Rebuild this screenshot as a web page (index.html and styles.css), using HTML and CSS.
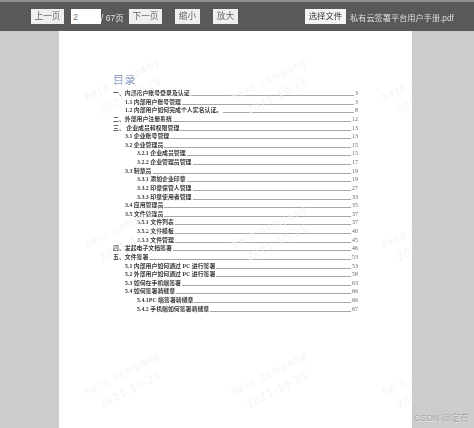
FILE: index.html
```html
<!DOCTYPE html>
<html lang="zh">
<head>
<meta charset="utf-8">
<title>PDF</title>
<link rel="stylesheet" href="styles.css">
</head>
<body>
<header class="toolbar">
  <div class="pager">
    <button class="btn btn-page">上一页</button>
    <input class="page-input" value="2">
    <span class="total">/ 67页</span>
    <button class="btn btn-page">下一页</button>
  </div>
  <button class="btn btn-zoom">缩小</button>
  <button class="btn btn-zoom">放大</button>
  <div class="file">
    <button class="btn btn-file">选择文件</button>
    <span class="filename">私有云签署平台用户手册.pdf</span>
  </div>
</header>
<main class="viewer">
  <section class="page">
    <h1 class="toc-title">目录</h1>
    <ol class="toc">
      <li class="l1"><span>一、内部用户账号登录及认证</span><i></i><b>3</b></li>
      <li class="l2"><span>1.1 内部用户账号管理</span><i></i><b>3</b></li>
      <li class="l2"><span>1.2 内部用户如何完成个人实名认证。</span><i></i><b>8</b></li>
      <li class="l1"><span>二、外部用户注册系统</span><i></i><b>12</b></li>
      <li class="l1"><span>三、 企业成员和权限管理</span><i></i><b>13</b></li>
      <li class="l2"><span>3.1 企业账号管理</span><i></i><b>13</b></li>
      <li class="l2"><span>3.2 企业管理员</span><i></i><b>15</b></li>
      <li class="l3"><span>3.2.1 企业成员管理</span><i></i><b>15</b></li>
      <li class="l3"><span>3.2.2 企业管理员管理</span><i></i><b>17</b></li>
      <li class="l2"><span>3.3 制章员</span><i></i><b>19</b></li>
      <li class="l3"><span>3.3.1 添加企业印章</span><i></i><b>19</b></li>
      <li class="l3"><span>3.3.2 印章保管人管理</span><i></i><b>27</b></li>
      <li class="l3"><span>3.3.3 印章使用者管理</span><i></i><b>33</b></li>
      <li class="l2"><span>3.4 应用管理员</span><i></i><b>35</b></li>
      <li class="l2"><span>3.5 文件管理员</span><i></i><b>37</b></li>
      <li class="l3"><span>3.5.1 文件列表</span><i></i><b>37</b></li>
      <li class="l3"><span>3.5.2 文件模板</span><i></i><b>40</b></li>
      <li class="l3"><span>3.5.3 文件管理</span><i></i><b>45</b></li>
      <li class="l1"><span>四、发起电子文档签署</span><i></i><b>46</b></li>
      <li class="l1"><span>五、文件签署</span><i></i><b>53</b></li>
      <li class="l2"><span>5.1 内部用户如何通过 PC 进行签署</span><i></i><b>53</b></li>
      <li class="l2"><span>5.2 外部用户如何通过 PC 进行签署</span><i></i><b>58</b></li>
      <li class="l2"><span>5.3 如何在手机端签署</span><i></i><b>63</b></li>
      <li class="l2"><span>5.4 如何签署骑缝章</span><i></i><b>66</b></li>
      <li class="l3"><span>5.4.1PC 端签署骑缝章</span><i></i><b>66</b></li>
      <li class="l3"><span>5.4.2 手机端如何签署骑缝章</span><i></i><b>67</b></li>
    </ol>
    <div class="mark m1">hero company<br>2021-10-25</div>
    <div class="mark m2">hero company<br>2021-10-25</div>
    <div class="mark m3">hero company<br>2021-10-25</div>
    <div class="mark m4">hero company<br>2021-10-25</div>
    <div class="mark m5">hero company<br>2021-10-25</div>
    <div class="mark m6">hero company<br>2021-10-25</div>
    <div class="mark m7">hero company<br>2021-10-25</div>
    <div class="mark m8">hero company<br>2021-10-25</div>
    <div class="mark m9">hero company<br>2021-10-25</div>
  </section>
</main>
<div class="csdn">CSDN @定在</div>
</body>
</html>
```
FILE: styles.css
```css
* { box-sizing: border-box; }
html, body { margin: 0; height: 100%; overflow: hidden; }
body {
  background: #cccccc;
  font-family: "Liberation Sans", "Noto Sans CJK SC", sans-serif;
  display: flex;
  flex-direction: column;
}
.toolbar {
  height: 31px;
  flex: none;
  background: #595959;
  border-top: 2px solid #8f8f8f;
  padding: 0 0 0 31px;
  display: flex;
  align-items: center;
  color: #f2f2f2;
  font-size: 9px;
}
.pager { display: flex; align-items: center; }
.btn {
  height: 15px;
  padding: 0;
  border: 0;
  background: #efefef;
  color: #666;
  font: 8.7px/15px "Liberation Sans", "Noto Sans CJK SC", sans-serif;
  filter: blur(0.35px);
}
.btn-page { width: 33px; }
.btn-zoom { width: 25px; margin-left: 13px; }
.page-input {
  width: 30px;
  height: 15px;
  margin-left: 7px;
  padding: 0 0 0 2px;
  border: 0;
  background: #fff;
  color: #777;
  font: 9px "Liberation Sans", sans-serif;
}
.total { width: 28px; font-size: 8.5px; white-space: nowrap; color: #e6e6e6; filter: blur(0.35px); }
.file { margin-left: 67px; display: flex; align-items: center; }
.btn-file { width: 41px; color: #333; background: #f4f4f4; font-size: 8.4px; }
.filename { margin-left: 4px; font-size: 8.2px; white-space: nowrap; color: #dedede; filter: blur(0.35px); }
.viewer { flex: 1; display: flex; padding-left: 59px; min-height: 0; }
.page {
  width: 353px;
  height: 100%;
  background: #fff;
  position: relative;
  overflow: hidden;
  padding: 42px 54px 0 54px;
  color: #333;
}
.toc-title {
  margin: 0 0 2px;
  font: 400 11px/14px "Liberation Sans", "Noto Sans CJK SC", sans-serif;
  color: #7d93bd;
  letter-spacing: 0.6px;
  filter: blur(0.3px);
}
.toc {
  list-style: none;
  margin: 0;
  padding: 0;
  font: 5.9px/8.64px "Liberation Serif", "Noto Sans CJK SC", serif;
  filter: blur(0.35px);
}
.toc li { display: flex; align-items: baseline; height: 8.64px; white-space: nowrap; }
.toc span { font-weight: 700; color: #3a3a3a; }
.toc i { flex: 1; border-bottom: 1px solid #a8a8a8; margin: 0 1px; transform: translateY(1px); }
.toc b { font-weight: 400; color: #666; }
.l2 { padding-left: 12px; }
.l3 { padding-left: 24px; }
.mark {
  position: absolute;
  width: 90px;
  text-align: center;
  font: 10px/18px "Liberation Sans", sans-serif;
  letter-spacing: 1.6px;
  color: #f1f1f1;
  white-space: nowrap;
  transform: rotate(-27deg);
  pointer-events: none;
  filter: blur(0.3px);
}
.m1 { left: 23px; top: 39px; }
.m2 { left: 170px; top: 39px; }
.m3 { left: 320px; top: 39px; }
.m4 { left: 23px; top: 186px; }
.m5 { left: 170px; top: 186px; }
.m6 { left: 320px; top: 186px; }
.m7 { left: 23px; top: 333px; }
.m8 { left: 170px; top: 333px; }
.m9 { left: 320px; top: 333px; }
.csdn {
  position: absolute;
  left: 414px;
  top: 412px;
  font-size: 9px;
  line-height: 12px;
  color: #a8a8a8;
  text-shadow: 0.5px 0.5px 0 #e4e4e4;
  white-space: nowrap;
}
```
